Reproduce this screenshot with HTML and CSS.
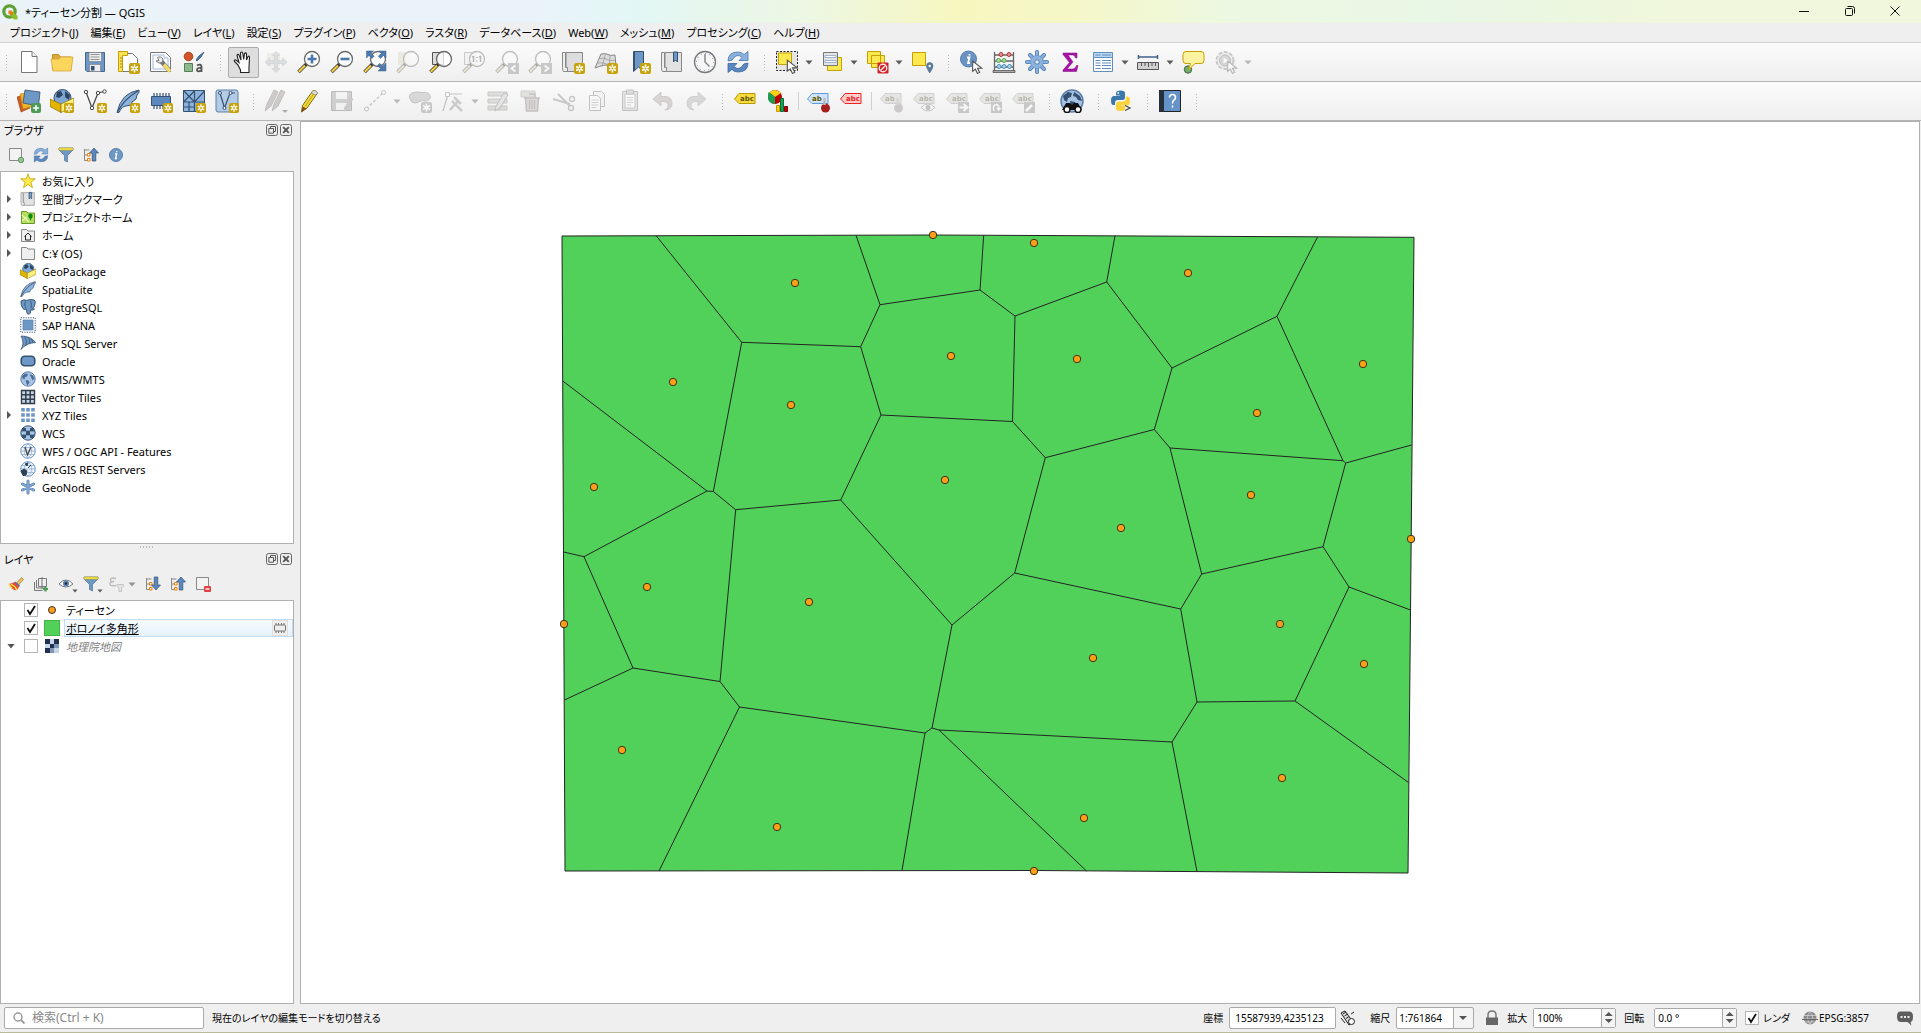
FILE: index.html
```
<!DOCTYPE html>
<html lang="ja">
  <head>
    <meta charset="UTF-8" />
    <meta name="viewport" content="width=device-width, initial-scale=1.0" />
    <title>*ティーセン分割 — QGIS</title>
    <link rel="stylesheet" href="styles.css">
  </head>
  <body>
    <!-- icon sprite -->
    <svg class="sprite" aria-hidden="true">
      <symbol id="new-badge" viewBox="0 0 11 11"><rect width="11" height="11" rx="2" fill="#c8a20a"/><path d="M5.5 1.5v8M2 3.5l7 4M2 7.5l7-4" stroke="#fff" stroke-width="1.500"/><circle cx="5.5" cy="5.5" r="1" fill="#c8a20a"/></symbol>
      <symbol id="caret" viewBox="0 0 8 5"><path d="M.5.5h7L4 4.500z" fill="#5c5c5c"/></symbol>
      <symbol id="magnifier" viewBox="0 0 24 24"><path d="M9.5 14L1.5 22" stroke="#333" stroke-width="3.500"/><path d="M8 15.500L1.800 21.700" stroke="#f5cf3e" stroke-width="2.200"/><circle cx="15" cy="9" r="7.500" fill="#fff" fill-opacity=".75" stroke="#6b6b6b" stroke-width="1.300"/></symbol>
      <symbol id="cursor" viewBox="0 0 11 13"><path d="M1 1v9.500l2.500-2 2 4 2-1-2-3.800h4z" fill="#fff" stroke="#555" stroke-width="1"/></symbol>
      <symbol id="globe" viewBox="0 0 24 24"><circle cx="12" cy="12" r="11" fill="#a8c4e4" stroke="#5a80ab" stroke-width="1.500"/><path d="M3 7l5-4 4 1-1 4-3 1-1 4-3-2zM14 3l6 4 2 5-4-1-2-3-3-1zM10 12l5 1 2 3-3 5-3-1z" fill="#34516f"/></symbol>
      <symbol id="wms" viewBox="0 0 16 16"><circle cx="8" cy="8" r="7.200" fill="#a8c4e4" stroke="#5a80ab"/><path d="M2 5l3-2.500 3 .5-1 2.500-2 .5-.5 2.500-2-1zM9.500 3l3.500 1.500 1.500 3-2 2-1.500-3.500zM5.500 9l3 .5 1 2-2 3-1-2z" fill="#4a6d96"/></symbol>
      <symbol id="wire-globe" viewBox="0 0 16 16"><circle cx="8" cy="8" r="7.300" fill="#eef4fb" stroke="#6d97c4"/><path d="M1 8h14M2 4.500h12M2 11.500h12M8 1c-5 4-5 10 0 14M8 1c5 4 5 10 0 14" fill="none" stroke="#8fb0d6" stroke-width=".8"/></symbol>

      <symbol id="logo" viewBox="0 0 16 16"><circle cx="7.500" cy="7.500" r="5.700" fill="none" stroke="#5fa033" stroke-width="3.200"/><path d="M7.500 7.500h3.500l4.500 4.500v3.500h-3.500L7.500 11z" fill="#8cbf2e"/><path d="M6.500 6.500h4l-1 1 2 2-2 2-2-2-1 1z" fill="#ee7913"/></symbol>
      <symbol id="doc-new" viewBox="0 0 24 24"><path d="M4.500 1.500h10.500l5 5v16H4.500z" fill="#fff" stroke="#777"/><path d="M15 1.500v5h5" fill="#eee" stroke="#777"/></symbol>
      <symbol id="folder-open" viewBox="0 0 24 24"><path d="M2.500 20V4.500h6l2 2.500H21v13z" fill="#dba93b" stroke="#c08f28"/><path d="M1 9h8l2-2h12l-2 14H3z" fill="#fbd65c" stroke="#d5a73c" stroke-width=".8"/></symbol>
      <symbol id="save" viewBox="0 0 24 24"><path d="M2.500 2.500h19v19H4l-1.500-1.500z" fill="#6d97c4" stroke="#41668f"/><path d="M6 2.500h12.500v9H6z" fill="#eee" stroke="#777" stroke-width=".6"/><path d="M7.500 4.500h9M7.500 7h9M7.500 9.500h9" stroke="#888" stroke-width=".9"/><path d="M6.500 14.500h11v7h-11z" fill="#eee" stroke="#777" stroke-width=".6"/><path d="M8 16h3.500v4.500H8z" fill="#34516f"/></symbol>
      <symbol id="layout-new" viewBox="0 0 24 24"><path d="M4.500 3.500h12l5 5v13h-17z" fill="#fff" stroke="#777"/><path d="M2.500 1.500h9v4h-5v16h-4z" fill="#fce15a" stroke="#c4a000"/><path d="M4 8h2M4 11h2M4 14h2M4 17h2" stroke="#a58500"/><use href="#new-badge" x="13" y="13" width="11" height="11"/></symbol>
      <symbol id="layout-manager" viewBox="0 0 24 24"><path d="M1.500 2.500h15l5 5v14h-20z" fill="#fff" stroke="#777"/><path d="M4 5h11v3h4v11H4z" fill="#fff" stroke="#9cb9dc"/><path d="M11 10l9 10" stroke="#777" stroke-width="4.500"/><path d="M8.500 7.500c2-1 5-1 5.500 2.500l-1 2.500-3 .5-3-2 3-.5z" fill="#eee" stroke="#777"/><path d="M15 14.500l6 7" stroke="#f5dc6a" stroke-width="3.500"/></symbol>
      <symbol id="style-manager" viewBox="0 0 24 24"><circle cx="6.500" cy="6.500" r="4.300" fill="#d0542d" stroke="#ad3c19"/><path d="M14 10l3-4 5-4-3 5-4 4z" fill="#5179a8" stroke="#41668f"/><path d="M2.500 13.500h8v8h-8z" fill="#8cb88a" stroke="#57805a"/><path d="M15 15.500q4-2 4.500 1V22M19 18q-4-.5-4 2 .5 2.500 4 .5" fill="none" stroke="#555" stroke-width="1.800"/></symbol>
      <symbol id="hand" viewBox="0 0 24 24"><path d="M7 15L3.500 11.500q-1-2 1.500-1.500l3 2.500-2-7q.5-2 2-.5l2 5-.5-7q1-2 2.200 0l1 6.500.8-6q1.500-1.500 2 .5v6l1.500-3.500q1.500-1 1.500 1L18 17v5.500H9.500V20z" fill="#fff" stroke="#222" stroke-width="1.100"/></symbol>
      <symbol id="pan-selection" viewBox="0 0 24 24"><path d="M3 3h13v13H3z" fill="#ece0b0"/><path d="M12 1.500l4 4h-2.500v5h5V8l4.500 4-4.500 4v-2.500h-5v5H16L12 22.500l-4-4h2.500v-5h-5V16L1 12l4.500-4v2.500h5v-5H8z" fill="#aebccb" stroke="#8b99a8" stroke-width=".7"/></symbol>
      <symbol id="zoom-in" viewBox="0 0 24 24"><use href="#magnifier"/><path d="M15 4.500v9M10.500 9h9" stroke="#4a78ad" stroke-width="2.600"/></symbol>
      <symbol id="zoom-out" viewBox="0 0 24 24"><use href="#magnifier"/><path d="M10.500 9h9" stroke="#4a78ad" stroke-width="2.600"/></symbol>
      <symbol id="zoom-full" viewBox="0 0 24 24"><use href="#magnifier"/><path d="M3.500 1h7l-2.300 2.300 3 3-2.200 2.200-3-3L3.500 8zM16 1h7v7l-2.500-2.500-3 3-2.200-2.200 3-3zM23 13v8h-8l2.500-2.500-3-3 2.200-2.200 3 3z" fill="#4d79ad" stroke="#3a6291" stroke-width=".5"/></symbol>
      <symbol id="zoom-selection" viewBox="0 0 24 24"><path d="M2 2h12v13H2z" fill="#e4d68c"/><use href="#magnifier"/></symbol>
      <symbol id="zoom-layer" viewBox="0 0 24 24"><path d="M3.500 2.500h11v12h-11z" fill="#ddd" stroke="#555"/><use href="#magnifier"/></symbol>
      <symbol id="zoom-native" viewBox="0 0 24 24"><path d="M2.500 2.500h11v12h-11z" fill="#eee" stroke="#888"/><use href="#magnifier"/><path d="M11.500 6v6M18.500 6v6M10 7l1.500-1M17 7l1.500-1M15 7v1M15 10.500v1" stroke="#555" stroke-width="1.500"/></symbol>
      <symbol id="zoom-last" viewBox="0 0 24 24"><use href="#magnifier"/><path d="M13 13h11v11H13z" fill="#888"/><path d="M20.500 15.500l-4 3 4 3" fill="none" stroke="#fff" stroke-width="1.800"/></symbol>
      <symbol id="zoom-next" viewBox="0 0 24 24"><use href="#magnifier"/><path d="M13 13h11v11H13z" fill="#888"/><path d="M16.500 15.500l4 3-4 3" fill="none" stroke="#fff" stroke-width="1.800"/></symbol>
      <symbol id="map-new" viewBox="0 0 24 24"><path d="M5 2.500h16.500v19H5z" fill="#ddd" stroke="#888"/><path d="M1.500 2.500h3v15h2v4h-4q-1-1-1-4z" fill="#eee" stroke="#888"/><use href="#new-badge" x="13" y="13" width="11" height="11"/></symbol>
      <symbol id="map3d-new" viewBox="0 0 24 24"><path d="M7 4q5-1 7 .5t7 .5l1 12q-5 0-8-1.500T1 18z" fill="#ddd" stroke="#888"/><path d="M5.500 8.500q5-1 7.500 1t8.500.5M3 13q6-1 9 1t9 0M11.500 4L8 16.500M16 5l-.5 11" stroke="#999" fill="none" stroke-width=".8"/><use href="#new-badge" x="13" y="13" width="11" height="11"/></symbol>
      <symbol id="bookmark-new" viewBox="0 0 24 24"><path d="M6.500 1.500h10v20L11.500 17l-5 4.500z" fill="#6d97c4" stroke="#34516f"/><path d="M7 2v18" stroke="#34516f" stroke-width="2"/><use href="#new-badge" x="13" y="13" width="11" height="11"/></symbol>
      <symbol id="bookmarks" viewBox="0 0 24 24"><path d="M5 2.500h16.500v19H5z" fill="#e2e2e2" stroke="#888"/><path d="M1.500 2.500h3v15h2v4h-4q-1-1-1-4z" fill="#eee" stroke="#888"/><path d="M13.500 2h4v10l-2-2-2 2z" fill="#6d97c4" stroke="#34516f"/></symbol>
      <symbol id="clock" viewBox="0 0 24 24"><circle cx="12" cy="12" r="10.500" fill="#f6f6f6" stroke="#777" stroke-width="1.300"/><circle cx="12" cy="12" r="8.500" fill="none" stroke="#5a86b8" stroke-dasharray="1 3.450"/><path d="M12 4v8l4.500 4.500" fill="none" stroke="#888" stroke-width="1.500"/></symbol>
      <symbol id="refresh" viewBox="0 0 24 24"><path d="M2 11q0-9 10-9 4 0 6 2.500L22 1.500v9h-9l3-3q-4-4-8 0-1 3.500-6 3.500z" fill="#8ab0dc" stroke="#4a78ad" stroke-width=".8"/><path d="M22 13q0 9-10 9-4 0-6-2.500L2 22.500v-9h9l-3 3q4 4 8 0 1-3.500 6-3.500z" fill="#5b88bf" stroke="#3c6a9f" stroke-width=".8"/></symbol>
      <symbol id="select" viewBox="0 0 24 24"><path d="M1.500 1.500h21v19h-21z" fill="#e4e4e4" stroke="#222" stroke-dasharray="2 1.500"/><path d="M3.500 3h13v11.500h-13z" fill="#fce94f" stroke="#c4a000"/><use href="#cursor" x="11" y="9" width="13" height="15"/></symbol>
      <symbol id="select-value" viewBox="0 0 24 24"><path d="M7.500 7.500h14v13h-14z" fill="#fce94f" stroke="#c4a000"/><path d="M3.500 2.500h14v13h-14z" fill="#e4e4e4" stroke="#777"/><path d="M5 5.500h11v2H5zM5 10.500h11v2H5z" fill="#fff" stroke="#8aa6c7" stroke-width=".8"/></symbol>
      <symbol id="deselect" viewBox="0 0 24 24"><path d="M2.500 1.500h13v12h-13zM6.500 5.500h13v12h-13z" fill="#fce94f" stroke="#c4a000"/><rect x="12.500" y="12.500" width="11" height="11" rx="1" fill="#d2232a"/><circle cx="18" cy="18" r="3.800" fill="none" stroke="#fff" stroke-width="1.200"/><path d="M15.500 20.500l5-5" stroke="#fff" stroke-width="1.200"/></symbol>
      <symbol id="select-location" viewBox="0 0 24 24"><path d="M2.500 2.500h13v13h-13z" fill="#fce94f" stroke="#c4a000"/><path d="M16.500 16q0-3.500 3.200-3.500T23 16q0 2-3.300 7-3.200-5-3.200-7z" fill="#5a7f9e" stroke="#46657f" stroke-width=".6"/><circle cx="19.700" cy="16" r="1.200" fill="#fff"/></symbol>
      <symbol id="identify" viewBox="0 0 24 24"><circle cx="9.500" cy="9" r="8" fill="#6a93c4" stroke="#557fb0"/><path d="M8 7.500h2.500L9 13h2M10.500 4v1.500" fill="none" stroke="#fff" stroke-width="1.800"/><use href="#cursor" x="12" y="10" width="13" height="14"/></symbol>
      <symbol id="abacus" viewBox="0 0 24 24"><path d="M2.500 2v19M21.500 2v19M2 5h20M2 11h20M2 17h20" stroke="#666" stroke-width="1.300"/><path d="M1 20.500h22v2H1z" fill="#aaa" stroke="#555" stroke-width=".8"/><g fill="#e89090" stroke="#b93030"><circle cx="9" cy="4.500" r="2"/><circle cx="17" cy="4.500" r="2"/></g><g fill="#a9dca0" stroke="#55a050"><circle cx="6.500" cy="10.500" r="2"/><circle cx="12" cy="10.500" r="2"/></g><g fill="#a9d0e8" stroke="#4a90b8"><circle cx="7" cy="16.500" r="2"/><circle cx="12" cy="16.500" r="2"/><circle cx="17.500" cy="16.500" r="2"/></g></symbol>
      <symbol id="gear" viewBox="0 0 24 24"><path d="M12 2v20M2 12h20M5 5l14 14M19 5L5 19" stroke="#4e7fb5" stroke-width="4" stroke-linecap="round"/><path d="M12 2v20M2 12h20M5 5l14 14M19 5L5 19" stroke="#8db2de" stroke-width="2.300" stroke-linecap="round"/><circle cx="12" cy="12" r="6.500" fill="#8db2de" stroke="#6692c6" stroke-width=".7"/><circle cx="12" cy="12" r="2.200" fill="#e8eef6" stroke="#4e7fb5"/></symbol>
      <symbol id="sigma" viewBox="0 0 24 24"><path d="M5 3h14v5h-1.500q-.5-3-3-3H10l5 7-6 7h5.500q3 0 4-3.500H20L18.500 21.500H5V20l6.500-7.500L5 4.500z" fill="#a912a9" stroke="#7d0a7d" stroke-width=".5"/></symbol>
      <symbol id="table" viewBox="0 0 24 24"><path d="M2.500 2.500h19v19h-19z" fill="#fff" stroke="#5f8fbf"/><path d="M3 3h18v4.500H3z" fill="#b9d5ef"/><path d="M3 7.500h18M4.500 5h5M11 5h9M4.500 10.500h5M11 10.500h9M4.500 13h5M11 13h9M4.500 15.500h5M11 15.500h9M4.500 18.500h5M11 18.500h9" stroke="#5f8fbf"/></symbol>
      <symbol id="measure" viewBox="0 0 24 24"><path d="M2.500 5v4M21.500 5v4M2.500 7h19" stroke="#41618a" stroke-width="1.500"/><path d="M1.500 12.500h21v7h-21z" fill="#d0d0d0" stroke="#555"/><path d="M5.500 13v3M9 13v3M12.500 13v4M16 13v3M19.500 13v3" stroke="#555"/></symbol>
      <symbol id="maptip" viewBox="0 0 24 24"><circle cx="7" cy="19.500" r="3.700" fill="#6fae6c" stroke="#44683f"/><path d="M5 1.500h15q3 0 3 3v6q0 3-3 3h-6L7.500 20l2-6.500H5q-3 0-3-3v-6q0-3 3-3z" fill="#fcf3a0" stroke="#c4a000"/></symbol>
      <symbol id="action" viewBox="0 0 24 24"><circle cx="11" cy="10.500" r="8.500" fill="#ddd" stroke="#888" stroke-width="2" stroke-dasharray="4 1.500"/><circle cx="11" cy="10.500" r="5.500" fill="#aaa" stroke="#666"/><path d="M9.500 7.500l5 3-5 3z" fill="#fff"/><use href="#cursor" x="12" y="10" width="13" height="14"/></symbol>

      <symbol id="datasource" viewBox="0 0 24 24"><path d="M0 8l9-3 4 14-9 4z" fill="#cf5a26" stroke="#9a3c12" stroke-width=".6"/><path d="M3 5l13-2 1 14-11 3z" fill="#efb52c" stroke="#b58412" stroke-width=".6"/><path d="M8 1l15 2-1.500 14L6 14z" fill="#6d97c4" stroke="#34516f" stroke-width=".8"/><rect x="14" y="14" width="10" height="10" rx="2" fill="#4f9a58"/><path d="M19 16v6M16 19h6" stroke="#fff" stroke-width="1.500"/></symbol>
      <symbol id="geopackage" viewBox="0 0 24 24"><circle cx="12.500" cy="9" r="8.500" fill="#7fa8d6" stroke="#34516f"/><path d="M7 3l4-1 2 4-4 3-3-1zM15 2l5 4-1 5-4-3z" fill="#2c4661"/><path d="M0 10l11 5v8.500L0 17.500z" fill="#e3b400" stroke="#8d6f00" stroke-width=".7"/><path d="M11 15l13-6v8l-13 6.500z" fill="#fdf07a" stroke="#8d6f00" stroke-width=".7"/></symbol>
      <symbol id="geopackage-new" viewBox="0 0 24 24"><use href="#geopackage"/><use href="#new-badge" x="14" y="14" width="10" height="10"/></symbol>
      <symbol id="shapefile" viewBox="0 0 24 24"><path d="M3 3l6 16L15 4l6-1.500" fill="none" stroke="#444" stroke-width="1.200"/><g fill="#fff" stroke="#444"><circle cx="3" cy="3" r="1.700"/><circle cx="9" cy="19" r="1.700"/><circle cx="15" cy="4" r="1.700"/><circle cx="21.500" cy="2.500" r="1.700"/></g><use href="#new-badge" x="14" y="14" width="10" height="10"/></symbol>
      <symbol id="feather" viewBox="0 0 24 24"><path d="M1 23.500Q5 4 23 1q1 2-2 5l-1 4-4 3-1 3-5 1q-4 0-7 6.500z" fill="#8eb3de" stroke="#34516f"/><path d="M1.500 23Q8 10 22 2" fill="none" stroke="#34516f" stroke-width="1.200"/></symbol>
      <symbol id="feather-new" viewBox="0 0 24 24"><use href="#feather"/><use href="#new-badge" x="14" y="14" width="10" height="10"/></symbol>
      <symbol id="chip" viewBox="0 0 24 24"><path d="M5 4v16M8 4v16M11 4v16M14 4v16M17 4v16M20 4v16" stroke="#34516f" stroke-width="1.200"/><path d="M2.500 7.500h19v9h-19z" fill="#5b88bf" stroke="#34516f"/></symbol>
      <symbol id="chip-new" viewBox="0 0 24 24"><use href="#chip"/><use href="#new-badge" x="14" y="14" width="10" height="10"/></symbol>
      <symbol id="memory" viewBox="0 0 16 16"><path d="M0 0h16v16H0z" fill="#eee" stroke="#d5d5d5"/><path d="M4 3v10M6.500 3v10M9.500 3v10M12 3v10" stroke="#777"/><rect x="2.500" y="5" width="11" height="6" rx="1" fill="#eee" stroke="#777"/></symbol>
      <symbol id="mesh" viewBox="0 0 24 24"><path d="M1.500 1.500h21v21h-21z" fill="#8eb3de" stroke="#34516f"/><path d="M1.500 13h21M12.500 1.500v21M7 13v9.500M1.500 18h11M1.500 1.500l11 11.500M12.500 2l-11 11M12.500 13L22.500 2" fill="none" stroke="#34516f" stroke-width="1.200"/><use href="#new-badge" x="14" y="14" width="10" height="10"/></symbol>
      <symbol id="virtual" viewBox="0 0 24 24"><rect x="1" y="1" width="22" height="22" rx="2" fill="#b4cbe6" stroke="#5a80ab"/><path d="M5 4l4.500 15L15 4h5" fill="none" stroke="#34516f" stroke-width="1.200"/><g fill="#fff" stroke="#34516f"><circle cx="5" cy="4" r="1.500"/><circle cx="9.500" cy="19" r="1.500"/><circle cx="15.500" cy="4" r="1.500"/></g><use href="#new-badge" x="14" y="14" width="10" height="10"/></symbol>
      <symbol id="pencils" viewBox="0 0 24 24"><path d="M1 22l2-7L10 1l4 2-7 14zM8 22l2-7L17 1l4 2-7 14z" fill="#aa8484" stroke="#876868"/><path d="M18 21h6l-3 3z" fill="#444"/></symbol>
      <symbol id="pencil" viewBox="0 0 24 24"><path d="M4.500 23l1-6.500L16 1.500q3-.5 4.500 2.500L10 19z" fill="#f3dc3c" stroke="#7c6a14"/><path d="M8 17.500L18 3" stroke="#b89b12"/><path d="M4.500 23l1-5.500 4 2z" fill="#7c4a20"/><path d="M16 1.500q3-.5 4.500 2.500L18.500 6 14.500 4z" fill="#ddd" stroke="#888" stroke-width=".6"/></symbol>
      <symbol id="save-edit" viewBox="0 0 24 24"><path d="M1.500 2.500h20v19h-20z" fill="#999" stroke="#666"/><path d="M6 3h11v7H6zM6 14h11v7H6z" fill="#eee"/><path d="M14 22l1-4 6-9 2 1-6 10z" fill="#b98787" stroke="#987"/></symbol>
      <symbol id="digitize" viewBox="0 0 24 24"><path d="M3 20L21 3" stroke="#777" stroke-width="1.300" stroke-dasharray="3 2"/><circle cx="3.500" cy="20" r="2" fill="#fff" stroke="#777"/><circle cx="20.500" cy="3.500" r="2" fill="#fff" stroke="#777"/></symbol>
      <symbol id="polygon-new" viewBox="0 0 24 24"><path d="M2 10q-2-5 3-6.500 5-1 9 0 8-1 8.500 5-2 5-8 3-4 1.500-7 2.500Q3 14 2 10z" fill="#a9aca8" stroke="#777"/><rect x="13" y="13" width="11" height="11" rx="2" fill="#888"/><path d="M18.500 14.500v8M15 16.500l7 4M15 20.500l7-4" stroke="#fff" stroke-width="1.500"/></symbol>
      <symbol id="vertex" viewBox="0 0 24 24"><path d="M2 22L6.500 7M7 5h14" stroke="#777" fill="none" stroke-width="1.200"/><path d="M4.500 3.500h4v4h-4z" fill="#fff" stroke="#777"/><path d="M9 21L18 11M13 8l7 7M11 12l10 10" stroke="#998f85" stroke-width="2.500"/></symbol>
      <symbol id="attributes-edit" viewBox="0 0 24 24"><path d="M2 3h19v4H2zM2 10h19v4H2zM2 17h19v4H2z" fill="#b9b99a" stroke="#888"/><path d="M9 22l1-5L18 4l4 2-8 13z" fill="#ccc" stroke="#876868"/></symbol>
      <symbol id="trash" viewBox="0 0 24 24"><path d="M2 2h14v6H2z" fill="#c5c5a0" stroke="#999"/><path d="M5 9h16M6.500 9l1 13h11l1-13M10 5h6v4" fill="#c9b0b0" stroke="#9b6d6d" stroke-width="1.500"/><path d="M10.500 11v9M13 11v9M15.500 11v9" stroke="#9b6d6d" stroke-width="1.300"/></symbol>
      <symbol id="cut" viewBox="0 0 24 24"><path d="M1 10l17 5M6 5l12 12" stroke="#888" stroke-width="2"/><circle cx="20" cy="10" r="2.500" fill="none" stroke="#888" stroke-width="1.500"/><circle cx="19" cy="19" r="2.500" fill="none" stroke="#888" stroke-width="1.500"/></symbol>
      <symbol id="copy" viewBox="0 0 24 24"><path d="M8.500 2.500h8l3 3v12h-11z" fill="#eee" stroke="#777"/><path d="M4.500 6.500h8l3 3v12h-11z" fill="#fff" stroke="#777"/><path d="M6.500 11h7M6.500 13.500h7M6.500 16h7M6.500 18.500h5" stroke="#999"/></symbol>
      <symbol id="paste" viewBox="0 0 24 24"><path d="M4.500 2.500h15v19h-15z" fill="#ccc" stroke="#777"/><path d="M7 5h10v14H7z" fill="#fff" stroke="#888"/><path d="M8.500 1h7v4h-7z" fill="#bbb" stroke="#777"/><path d="M9 8.500h6M9 11h6M9 13.500h6M9 16h4" stroke="#999"/></symbol>
      <symbol id="undo" viewBox="0 0 24 24"><path d="M2 10l8-7v4.500h4q7 0 7 7 0 6-7 6.500 4-2 3-5.500-1-3-4-3h-3V17z" fill="#b9a193" stroke="#a08878"/></symbol>
      <symbol id="redo" viewBox="0 0 24 24"><path d="M22 10l-8-7v4.500h-4q-7 0-7 7 0 6 7 6.500-4-2-3-5.500 1-3 4-3h3V17z" fill="#a5b0a5" stroke="#8d998d"/></symbol>
      <symbol id="label" viewBox="0 0 24 24"><path d="M1.500 10L6 4.500h16v10H6z" fill="#f5dc3c" stroke="#b99a00"/></symbol>
      <symbol id="diagram" viewBox="0 0 24 24"><circle cx="9" cy="8" r="7" fill="#c00000"/><path d="M9 8L3.500 3.500Q9-1.500 15 4z" fill="#fcd116"/><path d="M9 8v7Q2 14.500 2 8t1.500-4.500z" fill="#1aa055"/><path d="M10.500 16.500h3v6h-3z" fill="#fcd116" stroke="#c49a00"/><path d="M14.500 9.500h3v13h-3z" fill="#1aa055" stroke="#087038"/><path d="M18.500 17.500h3v5h-3z" fill="#c00000" stroke="#800"/></symbol>
      <symbol id="label-pin" viewBox="0 0 24 24"><path d="M1.500 10L6 4.500h16v10H6z" fill="#cfe4fb" stroke="#5f9bd8"/><circle cx="19.500" cy="19" r="4.500" fill="#a92020"/><path d="M18.500 9v7" stroke="#bbb" stroke-width="2.500"/></symbol>
      <symbol id="label-red" viewBox="0 0 24 24"><path d="M1.500 10L6 4.500h16v10H6z" fill="#fcc" stroke="#ee2222"/></symbol>
      <symbol id="label-gray" viewBox="0 0 24 24"><path d="M1.500 10L6 4.500h16v10H6z" fill="#d0ccb8" stroke="#999"/></symbol>
      <symbol id="tool-pin" viewBox="0 0 24 24"><circle cx="19.500" cy="19" r="4.500" fill="#a88"/><path d="M18.500 9v7" stroke="#aaa" stroke-width="2.500"/></symbol>
      <symbol id="tool-eye" viewBox="0 0 24 24"><path d="M9 18.500q7-7 14 0-7 7-14 0z" fill="#fff" stroke="#777"/><circle cx="16" cy="18.500" r="2.500" fill="#777"/></symbol>
      <symbol id="tool-move" viewBox="0 0 24 24"><path d="M13 13h11v11H13z" fill="#888"/><path d="M14.500 18.500h7M18.500 15l4 3.500-4 3.500" stroke="#fff" fill="none" stroke-width="2"/></symbol>
      <symbol id="tool-rotate" viewBox="0 0 24 24"><path d="M13 13h11v11H13z" fill="#888"/><path d="M16 22q-2-6 2.500-6.500 3 1 2 5M19 19l1.500 2 2-2" stroke="#fff" fill="none" stroke-width="1.500"/></symbol>
      <symbol id="tool-edit" viewBox="0 0 24 24"><path d="M13 13h11v11H13z" fill="#888"/><path d="M15 22l6-6" stroke="#fff" stroke-width="2.500"/></symbol>
      <symbol id="metasearch" viewBox="0 0 24 24"><use href="#globe"/><path d="M6 14l4 0 2 2 2-2h4l4 7H2z" fill="#111"/><circle cx="7" cy="20.500" r="3" fill="#fff" stroke="#111" stroke-width="1.500"/><circle cx="18" cy="20.500" r="3" fill="#fff" stroke="#111" stroke-width="1.500"/></symbol>
      <symbol id="python" viewBox="0 0 24 24"><path d="M7 7V4q0-2.500 4.500-2.500T16 4v4.500q0 2.500-2.500 2.500H9q-3 0-3 3v2H4.500Q2 16 2 11.500T5 7h6V6.500H7z" fill="#3b77a8"/><path d="M16 17v2.500q0 2.500-4.500 2.500T7 19.500V15q0-2.500 2.500-2.500H14q3 0 3-3v-2h1.500Q21 7.500 21 12t-3 4.500h-6v.5z" fill="#fcd23c"/><circle cx="9.200" cy="4" r=".9" fill="#fff"/><path d="M16 16.500l5 2.500-5 2.500" fill="none" stroke="#444" stroke-width="1.200"/></symbol>
      <symbol id="help" viewBox="0 0 24 24"><path d="M1.500 1.500h21v21h-21z" fill="#6592c8" stroke="#222"/><path d="M1 1h5v22H1z" fill="#25303c"/><path d="M11.500 8.500q0-3 3-3t3 3q0 1.500-1.500 2.500t-1.500 3.500M14.500 16.500v2" fill="none" stroke="#fff" stroke-width="1.600"/></symbol>

      <symbol id="add-layer" viewBox="0 0 16 16"><path d="M1.500 1.500h12v12h-12z" fill="#f3f3f3" stroke="#888"/><circle cx="13" cy="13" r="2.700" fill="#9dbd9d" stroke="#5a9a5f"/></symbol>
      <symbol id="filter" viewBox="0 0 16 16"><path d="M1 1h14v2L9.500 8.500V15l-3-1.500v-5L1 3z" fill="#6d97c4" stroke="#41668f" stroke-width=".6"/><path d="M1 1h14v2.200H1z" fill="#fce94f" stroke="#a58d10" stroke-width=".5"/></symbol>
      <symbol id="collapse" viewBox="0 0 16 16"><path d="M1.500 2v11.500h3M1.500 3h5M1.500 8h3" fill="none" stroke="#888"/><path d="M4.500 6.500H7V9H4.500zM4.500 11.500H7V14H4.500z" fill="#fff" stroke="#f08000"/><path d="M9.200 14V6H6.500L11 1l4.500 5h-2.700v8z" fill="#5b88bf" stroke="#34516f" stroke-width=".7"/></symbol>
      <symbol id="expand" viewBox="0 0 16 16"><path d="M1.500 2v11.500h3M1.500 3h5M1.500 8h3" fill="none" stroke="#888"/><path d="M4.500 6.500H7V9H4.500zM4.500 11.500H7V14H4.500z" fill="#fff" stroke="#f08000"/><path d="M9.200 1v8H6.500l4.500 5 4.500-5h-2.700V1z" fill="#5b88bf" stroke="#34516f" stroke-width=".7"/></symbol>
      <symbol id="info" viewBox="0 0 16 16"><circle cx="8" cy="8" r="6.500" fill="#6d97c4" stroke="#5a80ab"/><path d="M7 7h1.700L7.500 11.500H9M8.800 4v1.300" fill="none" stroke="#fff" stroke-width="1.300"/></symbol>
      <symbol id="float" viewBox="0 0 12 12"><rect x=".5" y=".5" width="11" height="11" rx="2" fill="#eee" stroke="#666"/><path d="M4.500 4V2.500H9.500v5H8M2.800 4.500h4.700v4.700H2.800z" fill="none" stroke="#555"/></symbol>
      <symbol id="close" viewBox="0 0 12 12"><rect x=".5" y=".5" width="11" height="11" rx="2" fill="#eee" stroke="#666"/><path d="M3.200 3.200l5.600 5.600M8.800 3.200L3.200 8.800" stroke="#555" stroke-width="1.900"/></symbol>
      <symbol id="star" viewBox="0 0 16 16"><path d="M8 .8l1.800 5h5.500l-4.400 3.400 1.600 5.500L8 11.400l-4.500 3.300 1.600-5.500L.7 5.800h5.500z" fill="#fcea4f" stroke="#c4a000" stroke-width=".8"/></symbol>
      <symbol id="folder" viewBox="0 0 16 16"><path d="M1.500 14.500v-12h5l1.500 1.500h6.500v10.500z" fill="#eee" stroke="#888"/></symbol>
      <symbol id="project-home" viewBox="0 0 16 16"><path d="M1.500 14.500v-12h5l1.500 1.500h6.500v10.500z" fill="#b5de5a" stroke="#69962a"/><path d="M2 6l7 7M2 12l5-4" stroke="#e8f5c0" stroke-width="1.200"/><circle cx="10.500" cy="7" r="2.300" fill="#0a8a12"/><path d="M9 8h3l-1.500 4z" fill="#0a8a12"/></symbol>
      <symbol id="home" viewBox="0 0 16 16"><path d="M1.500 14.500v-12h5l1.500 1.500h6.500v10.500z" fill="#eee" stroke="#888"/><path d="M4.500 9.500L8 6l3.500 3.500M5.500 9v4h5V9" fill="none" stroke="#222"/></symbol>
      <symbol id="postgres" viewBox="0 0 16 16"><path d="M1 2q3-2 6-.5 3-2 7-.5 2 1 1 4-.5 3-2.500 4.500 2 .5 2 .5-1 1.500-4 1V14q-1 1.500-3 1-1-1-1-4.500Q3.500 11 2.500 9 .5 5 1 2z" fill="#6d97c4" stroke="#34516f" stroke-width=".9"/><path d="M5 2.500q-1 4 1 7M10.500 2q1.500 3 .5 7.500" fill="none" stroke="#34516f" stroke-width=".8"/></symbol>
      <symbol id="hana" viewBox="0 0 16 16"><path d="M.8.800h14.400v14.400H.8z" fill="none" stroke="#34516f" stroke-dasharray="1.200 1.200"/><path d="M3 3h10v10H3z" fill="#6d97c4" stroke="#5a80ab" stroke-width=".7"/></symbol>
      <symbol id="mssql" viewBox="0 0 16 16"><path d="M1 1q10 0 14.500 6.500Q6 8 1 14.500 5 8 1 1z" fill="#6d97c4" stroke="#34516f" stroke-width=".8"/><path d="M4.500 1.500q3 4 1.500 9M8 2q2.500 3 1.500 6.500M11 3.500q1.500 2 1.500 4" fill="none" stroke="#34516f" stroke-width=".8"/></symbol>
      <symbol id="oracle" viewBox="0 0 16 16"><rect x="1.200" y="3.200" width="13.600" height="9.600" rx="3.500" fill="#6d97c4" stroke="#34516f" stroke-width="1.600"/></symbol>
      <symbol id="vtiles" viewBox="0 0 16 16"><path d="M1.500 1.500h13v13h-13z" fill="#c4d6ea" stroke="#333d4a" stroke-width="1.400"/><path d="M5.800 1v14M10.200 1v14M1 5.800h14M1 10.200h14" stroke="#333d4a" stroke-width="1.500"/></symbol>
      <symbol id="xyz" viewBox="0 0 16 16"><path d="M3 1v14M8 1v14M13 1v14" stroke="#6d97c4" stroke-width="3.600" stroke-dasharray="3.600 1.600"/></symbol>
      <symbol id="wcs" viewBox="0 0 16 16"><circle cx="8" cy="8" r="7.200" fill="#a8c4e4" stroke="#34516f"/><path d="M3 3h3v3H1.500zM10 3h3l1.500 3H10zM6 6h4v4H6zM1.500 10H6v3H3zM10 10h4.500L13 13h-3z" fill="#34516f"/><path d="M1 6h14M1 10h14" stroke="#34516f" stroke-width=".7"/></symbol>
      <symbol id="wfs" viewBox="0 0 16 16"><use href="#wire-globe"/><path d="M5 4l2.500 8L11 4" fill="none" stroke="#444" stroke-width="1.300"/></symbol>
      <symbol id="arcgis" viewBox="0 0 16 16"><use href="#wire-globe"/><path d="M1 10l3-2 3 2-1 4-3 .5zM5 3l3-1-1 3zM8 7l3-3" fill="#2f4154" stroke="#2f4154"/></symbol>
      <symbol id="geonode" viewBox="0 0 16 16"><path d="M8 2v12M2.500 5l11 6M2.500 11l11-6" stroke="#5a80ab" stroke-width="3" stroke-linecap="round"/><path d="M8 2v12M2.500 5l11 6M2.500 11l11-6" stroke="#7fa6d3" stroke-width="1.800" stroke-linecap="round"/></symbol>
      <symbol id="brush" viewBox="0 0 16 16"><path d="M8 7.500l5.500-6 2 2L10.500 9z" fill="#f0c060" stroke="#8a6420" stroke-width=".6"/><path d="M1 8l6-2 4.500 4L9 14q-2 1-5-1.500T1 8z" fill="#e94b2c"/><path d="M3 8l4 3 2 3M1 8.500l3 4" stroke="#fcdf4f" stroke-width="1.500"/><path d="M7 6l4.500 4" stroke="#4a78ad" stroke-width="1.500"/></symbol>
      <symbol id="group" viewBox="0 0 16 16"><path d="M1.500 6v8.500h8M3.500 4v8h8M5.500 2.500h8v8h-8zM9 13V1" fill="none" stroke="#777"/><path d="M12.500 10.500v5M10 13h5" stroke="#4f9a58" stroke-width="2.200"/></symbol>
      <symbol id="eye" viewBox="0 0 16 16"><path d="M1 8q7-8 14 0-7 6-14 0z" fill="#fff" stroke="#777"/><circle cx="8" cy="7.500" r="3" fill="#5b88bf"/><circle cx="8" cy="7.500" r="1.300" fill="#222"/></symbol>
      <symbol id="expression" viewBox="0 0 16 16"><path d="M8 2.500Q3 1 2.500 3.500T6 5.500Q2 5.500 2 8t6 1.500" fill="none" stroke="#999" stroke-width="1.400"/><path d="M9 8.500h6.500v1.500l-2 2v3.500h-2.500V12l-2-2z" fill="#ddd" stroke="#aaa"/></symbol>
      <symbol id="remove" viewBox="0 0 16 16"><path d="M1.500 1.500h12v12h-12z" fill="#f3f3f3" stroke="#888"/><rect x="9" y="10" width="7" height="6" rx="1" fill="#e04040"/><path d="M10.500 13h4" stroke="#fff" stroke-width="1.300"/></symbol>
      <symbol id="raster" viewBox="0 0 14 14"><path d="M0 0h14v14H0z" fill="#c8d6e8"/><path d="M0 0h5v5H0zM9 0h5v5H9zM5 5h4v4H5zM0 9h5v5H0z" fill="#1f3050"/><path d="M5 9h4v5H5zM9 5h5v4H9z" fill="#7f95b5"/></symbol>
      <symbol id="extents" viewBox="0 0 16 16"><path d="M1 3l4-2 8 11-4 3z" fill="#ddd" stroke="#222"/><path d="M3 4l3-2M4.500 6l3-2M6 8.500l3-2M8 11l3-2M1 8l4 5M11 4l3-2" stroke="#222"/><circle cx="11.500" cy="11.500" r="3" fill="#fff" stroke="#222"/></symbol>
      <symbol id="lock" viewBox="0 0 14 16"><path d="M3 8V5q0-4 4-4t4 4v3" fill="none" stroke="#777" stroke-width="1.500"/><path d="M1 7.500h12V15H1z" fill="#666"/></symbol>
      <symbol id="crs" viewBox="0 0 16 16"><circle cx="8" cy="8" r="6.500" fill="#888"/><path d="M0 9h16M2 5.500h12M3 12h10M8 1.500q-5 6 0 13M8 1.500q5 6 0 13" fill="none" stroke="#ddd" stroke-width=".7"/><path d="M0 9.500h16" stroke="#666"/></symbol>
      <symbol id="message" viewBox="0 0 16 16"><path d="M4 1.500h8q4 0 4 5T13.500 12l1 3.500-4-3.500H4Q0 12 0 6.500T4 1.500z" fill="#5e5e5e"/><path d="M3.500 6h2v2h-2zM7 6h2v2H7zM10.500 6h2v2h-2z" fill="#eee"/></symbol>
    </svg>

    <div class="window">
      <header class="titlebar">
        <svg class="logo"><use href="#logo"/></svg>
        <h1>*ティーセン分割 — QGIS</h1>
        <div class="window-buttons">
          <button aria-label="最小化"><svg viewBox="0 0 10 10"><path d="M0 5.500h10" stroke="#111"/></svg></button>
          <button aria-label="元に戻す"><svg viewBox="0 0 10 10"><rect x=".5" y="2.500" width="7" height="7" rx="1" fill="none" stroke="#111"/><path d="M2.500.500h5q2 0 2 2v5" fill="none" stroke="#111"/></svg></button>
          <button aria-label="閉じる"><svg viewBox="0 0 10 10"><path d="M.5.500l9 9M9.500.500l-9 9" stroke="#111"/></svg></button>
        </div>
      </header>

      <nav class="menubar">
        <button>プロジェクト(<u>J</u>)</button>
        <button>編集(<u>E</u>)</button>
        <button>ビュー(<u>V</u>)</button>
        <button>レイヤ(<u>L</u>)</button>
        <button>設定(<u>S</u>)</button>
        <button>プラグイン(<u>P</u>)</button>
        <button>ベクタ(<u>O</u>)</button>
        <button>ラスタ(<u>R</u>)</button>
        <button>データベース(<u>D</u>)</button>
        <button>Web(<u>W</u>)</button>
        <button>メッシュ(<u>M</u>)</button>
        <button>プロセシング(<u>C</u>)</button>
        <button>ヘルプ(<u>H</u>)</button>
      </nav>

      <div class="toolbar">
        <span class="handle"></span>
        <button class="tool" aria-label="新規プロジェクト"><svg><use href="#doc-new"/></svg></button>
        <button class="tool" aria-label="開く"><svg><use href="#folder-open"/></svg></button>
        <button class="tool" aria-label="保存"><svg><use href="#save"/></svg></button>
        <button class="tool" aria-label="新規レイアウト"><svg><use href="#layout-new"/></svg></button>
        <button class="tool" aria-label="レイアウトマネージャ"><svg><use href="#layout-manager"/></svg></button>
        <button class="tool" aria-label="スタイルマネージャ"><svg><use href="#style-manager"/></svg></button>
        <span class="handle"></span>
        <button class="tool active" aria-label="地図を移動"><svg><use href="#hand"/></svg></button>
        <button class="tool" disabled aria-label="選択部分に移動"><svg><use href="#pan-selection"/></svg></button>
        <button class="tool" aria-label="拡大"><svg><use href="#zoom-in"/></svg></button>
        <button class="tool" aria-label="縮小"><svg><use href="#zoom-out"/></svg></button>
        <button class="tool" aria-label="全域表示"><svg><use href="#zoom-full"/></svg></button>
        <button class="tool" disabled aria-label="選択部分にズーム"><svg><use href="#zoom-selection"/></svg></button>
        <button class="tool" aria-label="レイヤにズーム"><svg><use href="#zoom-layer"/></svg></button>
        <button class="tool" disabled aria-label="ネイティブ解像度にズーム"><svg><use href="#zoom-native"/></svg></button>
        <button class="tool" disabled aria-label="直前の表示領域"><svg><use href="#zoom-last"/></svg></button>
        <button class="tool" disabled aria-label="次の表示領域"><svg><use href="#zoom-next"/></svg></button>
        <button class="tool" aria-label="新規地図ビュー"><svg><use href="#map-new"/></svg></button>
        <button class="tool" aria-label="新規3D地図ビュー"><svg><use href="#map3d-new"/></svg></button>
        <button class="tool" aria-label="新規ブックマーク"><svg><use href="#bookmark-new"/></svg></button>
        <button class="tool" aria-label="ブックマークを表示"><svg><use href="#bookmarks"/></svg></button>
        <button class="tool" aria-label="時系列コントローラ"><svg><use href="#clock"/></svg></button>
        <button class="tool" aria-label="再読み込み"><svg><use href="#refresh"/></svg></button>
        <span class="handle"></span>
        <button class="tool menu" aria-label="地物を選択"><svg><use href="#select"/></svg><svg class="caret"><use href="#caret"/></svg></button>
        <button class="tool menu" aria-label="値で選択"><svg><use href="#select-value"/></svg><svg class="caret"><use href="#caret"/></svg></button>
        <button class="tool menu" aria-label="選択解除"><svg><use href="#deselect"/></svg><svg class="caret"><use href="#caret"/></svg></button>
        <button class="tool" aria-label="場所で選択"><svg><use href="#select-location"/></svg></button>
        <span class="handle"></span>
        <button class="tool" aria-label="地物情報を表示"><svg><use href="#identify"/></svg></button>
        <button class="tool" aria-label="フィールド計算機"><svg><use href="#abacus"/></svg></button>
        <button class="tool" aria-label="ツールボックス"><svg><use href="#gear"/></svg></button>
        <button class="tool" aria-label="統計サマリ"><svg><use href="#sigma"/></svg></button>
        <button class="tool menu" aria-label="属性テーブル"><svg><use href="#table"/></svg><svg class="caret"><use href="#caret"/></svg></button>
        <button class="tool menu" aria-label="線の長さを測る"><svg><use href="#measure"/></svg><svg class="caret"><use href="#caret"/></svg></button>
        <button class="tool" aria-label="地図のヒント"><svg><use href="#maptip"/></svg></button>
        <button class="tool menu" disabled aria-label="アクションを実行"><svg><use href="#action"/></svg><svg class="caret"><use href="#caret"/></svg></button>
      </div>

      <div class="toolbar">
        <span class="handle"></span>
        <button class="tool" aria-label="データソースマネージャ"><svg><use href="#datasource"/></svg></button>
        <button class="tool" aria-label="新規GeoPackageレイヤ"><svg><use href="#geopackage-new"/></svg></button>
        <button class="tool" aria-label="新規シェープファイル"><svg><use href="#shapefile"/></svg></button>
        <button class="tool" aria-label="新規SpatiaLiteレイヤ"><svg><use href="#feather-new"/></svg></button>
        <button class="tool" aria-label="新規一時スクラッチレイヤ"><svg><use href="#chip-new"/></svg></button>
        <button class="tool" aria-label="新規メッシュレイヤ"><svg><use href="#mesh"/></svg></button>
        <button class="tool" aria-label="新規仮想レイヤ"><svg><use href="#virtual"/></svg></button>
        <span class="handle"></span>
        <button class="tool" disabled aria-label="現在の編集"><svg><use href="#pencils"/></svg></button>
        <button class="tool" aria-label="編集モード切替"><svg><use href="#pencil"/></svg></button>
        <button class="tool" disabled aria-label="編集内容を保存"><svg><use href="#save-edit"/></svg></button>
        <button class="tool menu" disabled aria-label="線分でデジタイズ"><svg><use href="#digitize"/></svg><svg class="caret"><use href="#caret"/></svg></button>
        <button class="tool" disabled aria-label="ポリゴン地物を追加"><svg><use href="#polygon-new"/></svg></button>
        <button class="tool menu" disabled aria-label="頂点ツール"><svg><use href="#vertex"/></svg><svg class="caret"><use href="#caret"/></svg></button>
        <button class="tool" disabled aria-label="属性を変更"><svg><use href="#attributes-edit"/></svg></button>
        <button class="tool" disabled aria-label="選択物を削除"><svg><use href="#trash"/></svg></button>
        <button class="tool" disabled aria-label="切り取り"><svg><use href="#cut"/></svg></button>
        <button class="tool" disabled aria-label="コピー"><svg><use href="#copy"/></svg></button>
        <button class="tool" disabled aria-label="貼り付け"><svg><use href="#paste"/></svg></button>
        <button class="tool" disabled aria-label="元に戻す"><svg><use href="#undo"/></svg></button>
        <button class="tool" disabled aria-label="やり直す"><svg><use href="#redo"/></svg></button>
        <span class="handle"></span>
        <button class="tool" aria-label="ラベル設定"><svg viewBox="0 0 24 24"><use href="#label"/><text x="7" y="12">abc</text></svg></button>
        <button class="tool" aria-label="ダイアグラム設定"><svg><use href="#diagram"/></svg></button>
        <span class="separator"></span>
        <button class="tool" aria-label="固定ラベル"><svg viewBox="0 0 24 24"><use href="#label-pin"/><text x="6" y="12">ab</text></svg></button>
        <button class="tool" aria-label="未配置ラベル"><svg viewBox="0 0 24 24"><use href="#label-red"/><text class="red" x="7" y="12">abc</text></svg></button>
        <span class="separator"></span>
        <button class="tool" disabled aria-label="ラベルを固定"><svg viewBox="0 0 24 24"><use href="#label-gray"/><use href="#tool-pin"/><text x="6" y="12">ab</text></svg></button>
        <button class="tool" disabled aria-label="ラベルの表示"><svg viewBox="0 0 24 24"><use href="#label-gray"/><use href="#tool-eye"/><text x="7" y="12">abc</text></svg></button>
        <button class="tool" disabled aria-label="ラベルを移動"><svg viewBox="0 0 24 24"><use href="#label-gray"/><use href="#tool-move"/><text x="7" y="12">abc</text></svg></button>
        <button class="tool" disabled aria-label="ラベルを回転"><svg viewBox="0 0 24 24"><use href="#label-gray"/><use href="#tool-rotate"/><text x="7" y="12">abc</text></svg></button>
        <button class="tool" disabled aria-label="ラベルを変更"><svg viewBox="0 0 24 24"><use href="#label-gray"/><use href="#tool-edit"/><text x="7" y="12">abc</text></svg></button>
        <span class="handle"></span>
        <button class="tool" aria-label="MetaSearch"><svg><use href="#metasearch"/></svg></button>
        <span class="handle"></span>
        <button class="tool" aria-label="Pythonコンソール"><svg><use href="#python"/></svg></button>
        <span class="handle"></span>
        <button class="tool" aria-label="ヘルプ"><svg><use href="#help"/></svg></button>
        <span class="handle"></span>
      </div>

      <main class="workspace">
        <aside class="docks">
          <section class="dock browser">
            <div class="dock-title">
              <h2>ブラウザ</h2>
              <button aria-label="フロート"><svg><use href="#float"/></svg></button>
              <button aria-label="閉じる"><svg><use href="#close"/></svg></button>
            </div>
            <div class="dock-tools">
              <button aria-label="レイヤを追加"><svg><use href="#add-layer"/></svg></button>
              <button aria-label="再読み込み"><svg><use href="#refresh"/></svg></button>
              <button aria-label="フィルタ"><svg><use href="#filter"/></svg></button>
              <button aria-label="すべて折りたたむ"><svg><use href="#collapse"/></svg></button>
              <button aria-label="プロパティ"><svg><use href="#info"/></svg></button>
            </div>
            <ul class="tree">
              <li><svg><use href="#star"/></svg>お気に入り</li>
              <li class="closed"><svg><use href="#bookmarks"/></svg>空間ブックマーク</li>
              <li class="closed"><svg><use href="#project-home"/></svg>プロジェクトホーム</li>
              <li class="closed"><svg><use href="#home"/></svg>ホーム</li>
              <li class="closed"><svg><use href="#folder"/></svg>C:¥ (OS)</li>
              <li><svg><use href="#geopackage"/></svg>GeoPackage</li>
              <li><svg><use href="#feather"/></svg>SpatiaLite</li>
              <li><svg><use href="#postgres"/></svg>PostgreSQL</li>
              <li><svg><use href="#hana"/></svg>SAP HANA</li>
              <li><svg><use href="#mssql"/></svg>MS SQL Server</li>
              <li><svg><use href="#oracle"/></svg>Oracle</li>
              <li><svg><use href="#wms"/></svg>WMS/WMTS</li>
              <li><svg><use href="#vtiles"/></svg>Vector Tiles</li>
              <li class="closed"><svg><use href="#xyz"/></svg>XYZ Tiles</li>
              <li><svg><use href="#wcs"/></svg>WCS</li>
              <li><svg><use href="#wfs"/></svg>WFS / OGC API - Features</li>
              <li><svg><use href="#arcgis"/></svg>ArcGIS REST Servers</li>
              <li><svg><use href="#geonode"/></svg>GeoNode</li>
            </ul>
          </section>
          <div class="splitter"></div>
          <section class="dock layers">
            <div class="dock-title">
              <h2>レイヤ</h2>
              <button aria-label="フロート"><svg><use href="#float"/></svg></button>
              <button aria-label="閉じる"><svg><use href="#close"/></svg></button>
            </div>
            <div class="dock-tools">
              <button aria-label="スタイル"><svg><use href="#brush"/></svg></button>
              <button aria-label="グループを追加"><svg><use href="#group"/></svg></button>
              <button aria-label="地図テーマ"><svg><use href="#eye"/></svg><svg class="caret corner"><use href="#caret"/></svg></button>
              <button aria-label="凡例をフィルタ"><svg><use href="#filter"/></svg><svg class="caret corner"><use href="#caret"/></svg></button>
              <button class="wide" disabled aria-label="式でフィルタ"><svg><use href="#expression"/></svg><svg class="caret"><use href="#caret"/></svg></button>
              <button aria-label="すべて展開"><svg><use href="#expand"/></svg></button>
              <button aria-label="すべて折りたたむ"><svg><use href="#collapse"/></svg></button>
              <button aria-label="レイヤを削除"><svg><use href="#remove"/></svg></button>
            </div>
            <ul class="layer-list">
              <li>
                <input type="checkbox" id="layer-points" checked>
                <span class="symbol dot"></span>
                <label for="layer-points">ティーセン</label>
              </li>
              <li class="current">
                <input type="checkbox" id="layer-voronoi" checked>
                <span class="symbol fill"></span>
                <label for="layer-voronoi"><u>ボロノイ多角形</u><svg class="memory"><use href="#memory"/></svg></label>
              </li>
              <li class="open">
                <input type="checkbox" id="layer-base">
                <svg class="symbol"><use href="#raster"/></svg>
                <label for="layer-base">地理院地図</label>
              </li>
            </ul>
          </section>
        </aside>

        <div class="canvas">
          <svg viewBox="301 122 1618 881" role="img" aria-label="ボロノイ多角形">
            <path class="area" d="M562 236L932 235 1414 237.300 1411 560 1408 873 1034 870.500 565 871z"/>
            <path class="edges" d="M656 235.500L741.700 342.300 860.700 346.700 880 304.700 856 235.300M880 304.700L980 290 983.700 235.300M980 290L1015 316 1106.700 282 1115 235.700M1106.700 282L1172 368 1277 316.300 1317.500 237M1172 368L1154.300 429.500 1045.300 457.700 1012.500 421.500 1015 316M1012.500 421.500L881 415 860.700 346.700M881 415L840.700 500 735.700 509.700 713.300 491.500 741.700 342.300M713.300 491.500L707 491 562.800 381M707 491L584 556.700 563.700 552M584 556.700L633 668 564.500 700M633 668L720 681.500 735.700 509.700M720 681.500L739.500 707 659 871M739.500 707L925 733 902 870.500M925 733L932 728 939 730 1086.500 871M939 730L1172 742 1197 871.500M1172 742L1197 702 1295 701 1408.500 782.500M1295 701L1349 587 1410.500 610M1349 587L1323 546.700 1345.700 463 1411.500 445M1345.700 463L1343 460.700 1277 316.300M1343 460.700L1170 448 1154.300 429.500M1170 448L1201.700 574 1323 546.700M1201.700 574L1180.700 609 1197 702M1180.700 609L1014.700 573 1045.300 457.700M1014.700 573L952 625 932 728M952 625L840.700 500"/>
            <g class="points">
              <circle cx="795" cy="283" r="3.700"/>
              <circle cx="673" cy="382" r="3.700"/>
              <circle cx="791" cy="405" r="3.700"/>
              <circle cx="594" cy="487" r="3.700"/>
              <circle cx="647" cy="587" r="3.700"/>
              <circle cx="809" cy="602" r="3.700"/>
              <circle cx="933" cy="235" r="3.700"/>
              <circle cx="951" cy="356" r="3.700"/>
              <circle cx="945" cy="480" r="3.700"/>
              <circle cx="1034" cy="243" r="3.700"/>
              <circle cx="1188" cy="273" r="3.700"/>
              <circle cx="1077" cy="359" r="3.700"/>
              <circle cx="1363" cy="364" r="3.700"/>
              <circle cx="1257" cy="413" r="3.700"/>
              <circle cx="1251" cy="495" r="3.700"/>
              <circle cx="1121" cy="528" r="3.700"/>
              <circle cx="1411" cy="539" r="3.700"/>
              <circle cx="564" cy="624" r="3.700"/>
              <circle cx="1093" cy="658" r="3.700"/>
              <circle cx="1280" cy="624" r="3.700"/>
              <circle cx="1364" cy="664" r="3.700"/>
              <circle cx="622" cy="750" r="3.700"/>
              <circle cx="777" cy="827" r="3.700"/>
              <circle cx="1084" cy="818" r="3.700"/>
              <circle cx="1282" cy="778" r="3.700"/>
              <circle cx="1034" cy="871" r="3.700"/>
            </g>
          </svg>
        </div>
      </main>

      <footer class="statusbar">
        <div class="search">
          <svg viewBox="0 0 12 12"><circle cx="5" cy="5" r="4" fill="none" stroke="#999" stroke-width="1.500"/><path d="M8 8l3.500 3.500" stroke="#999" stroke-width="1.800"/></svg>
          <input type="text" placeholder="検索(Ctrl + K)" aria-label="検索">
        </div>
        <p class="message">現在のレイヤの編集モードを切り替える</p>
        <label for="coords">座標</label>
        <input class="field coords" type="text" id="coords" value="15587939,4235123">
        <button class="flat" aria-label="表示領域切替"><svg><use href="#extents"/></svg></button>
        <label for="scale">縮尺</label>
        <select class="field scale" id="scale"><option>1:761864</option></select>
        <button class="flat lock" aria-label="縮尺をロック"><svg><use href="#lock"/></svg></button>
        <label for="magnify">拡大</label>
        <div class="spin">
          <input type="text" id="magnify" value="100%">
          <div class="steps"><button aria-label="増やす"></button><button aria-label="減らす"></button></div>
        </div>
        <label class="rotate" for="rotation">回転</label>
        <div class="spin">
          <input type="text" id="rotation" value="0.0 °">
          <div class="steps"><button aria-label="増やす"></button><button aria-label="減らす"></button></div>
        </div>
        <label class="render"><input type="checkbox" checked>レンダ</label>
        <button class="flat crs"><svg><use href="#crs"/></svg>EPSG:3857</button>
        <button class="flat" aria-label="メッセージ"><svg><use href="#message"/></svg></button>
      </footer>
    </div>
  </body>
</html>
```
FILE: styles.css
```
* {
  box-sizing: border-box;
}

body {
  margin: 0;
  font-family: "Noto Sans", "Noto Sans CJK JP", sans-serif;
  font-size: 11px;
  font-feature-settings: "palt";
  color: #000;
  background-color: #efefef;
}

button,
input,
select {
  font: inherit;
  font-feature-settings: inherit;
  color: inherit;
  margin: 0;
}

button {
  border: none;
  padding: 0;
  background: none;
}

h1,
h2,
p,
ul {
  margin: 0;
  padding: 0;
  font-size: 11px;
  font-weight: normal;
}

ul {
  list-style: none;
}

svg {
  display: block;
  flex: none;
}

.sprite {
  position: absolute;
  width: 0;
  height: 0;
}

.window {
  display: flex;
  flex-direction: column;
  height: 100vh;
  border-bottom: 1px solid #b9ba98;
}

/* Title bar */
.titlebar {
  display: flex;
  align-items: center;
  height: 23px;
  padding-left: 2px;
  background: linear-gradient(90deg, #e9f3f8 0%, #eaf3f9 28%, #e2f7f5 33%, #edf7e3 42%, #f6f7bf 50%, #f5f7c8 56%, #ecf8e1 64%, #e9f7e6 75%, #eff7dc 86%, #f1f7dd 100%);
}

.logo {
  width: 16px;
  height: 16px;
}

.titlebar h1 {
  margin-left: 7px;
}

.window-buttons {
  display: flex;
  margin-left: auto;
}

.window-buttons button {
  display: grid;
  place-items: center;
  width: 46px;
  height: 20px;
  padding-bottom: 2px;
}

.window-buttons button:last-child {
  width: 44px;
  margin-right: 4px;
}

.window-buttons svg {
  width: 10px;
  height: 10px;
}

/* Menu */
.menubar {
  display: flex;
  align-items: center;
  gap: 12px;
  height: 20px;
  padding: 0 10px 1px;
  border-bottom: 1px solid #d3d3d3;
}

/* Toolbars */
.toolbar {
  display: flex;
  align-items: center;
  gap: 2px;
  height: 39px;
  background: linear-gradient(#fbfbfb, #efefef);
  border-bottom: 1px solid #b4b4b4;
}

.handle {
  width: 4px;
  height: 17px;
  margin: 0 3px 0 7px;
  background: radial-gradient(circle, #bbb 1px, transparent 1px) 0 0 / 3px 3px;
}

.handle:first-child {
  margin-left: 5px;
}

.separator {
  width: 1px;
  height: 18px;
  margin: 0 2px;
  background-color: #d0d0d0;
}

.tool {
  display: flex;
  align-items: center;
  width: 31px;
  height: 31px;
  padding: 0 2px;
  border: 1px solid transparent;
  border-radius: 2px;
}

.tool svg {
  width: 24px;
  height: 24px;
}

.tool text {
  font-family: "DejaVu Sans", sans-serif;
  font-size: 7px;
  font-weight: bold;
  fill: #665500;
}

.tool text.red {
  fill: #ee2222;
}

.tool.menu {
  width: 43px;
}

.tool .caret,
.dock-tools .caret {
  width: 8px;
  height: 5px;
}

.tool .caret {
  margin-left: 6px;
}

.tool.active {
  background-color: #dedede;
  border-color: #ababab;
}

.tool:disabled svg {
  opacity: 0.4;
  filter: grayscale(0.7);
}

/* Docks */
.workspace {
  display: flex;
  flex: 1;
  min-height: 0;
}

.docks {
  display: flex;
  flex-direction: column;
  flex: none;
  width: 300px;
  padding-right: 6px;
}

.dock {
  display: flex;
  flex-direction: column;
}

.browser {
  height: 423px;
}

.layers {
  flex: 1;
  min-height: 0;
}

.splitter {
  height: 6px;
  width: 16px;
  margin: 0 auto;
  background: radial-gradient(circle, #bbb 1px, transparent 1px) 0 0 / 3px 6px;
}

.dock-title {
  display: flex;
  align-items: center;
  gap: 2px;
  height: 18px;
  padding: 0 2px 0 4px;
}

.dock-title h2 {
  margin-right: auto;
}

.dock-title svg {
  width: 12px;
  height: 12px;
}

.dock-tools {
  display: flex;
  align-items: center;
  gap: 9px;
  height: 32px;
  padding-left: 8px;
}

.dock-tools button {
  display: flex;
  align-items: center;
  position: relative;
}

.dock-tools svg {
  width: 16px;
  height: 16px;
}

.dock-tools .wide {
  gap: 4px;
}

.dock-tools .corner {
  position: absolute;
  right: -4px;
  bottom: -1px;
  width: 6px;
  height: 4px;
}

.dock-tools button:disabled svg {
  opacity: 0.6;
}

.tree,
.layer-list {
  flex: 1;
  min-height: 0;
  background-color: #fff;
  border: 1px solid #b0b0b0;
}

.tree li,
.layer-list li {
  display: flex;
  align-items: center;
  height: 18px;
  white-space: nowrap;
}

.tree li::before,
.layer-list li::before {
  content: "";
  width: 4px;
  height: 8px;
  margin: 0 8px 0 6px;
}

.tree li.closed::before {
  background-color: #555;
  clip-path: polygon(0 0, 100% 50%, 0 100%);
}

.tree svg {
  width: 16px;
  height: 16px;
  margin: 0 6px 0 1px;
}

.layer-list li::before {
  width: 8px;
  height: 5px;
  margin-right: 9px;
}

.layer-list li.open::before {
  background-color: #555;
  clip-path: polygon(0 0, 100% 0, 50% 100%);
}

.layer-list label {
  padding-left: 2px;
}

input[type="checkbox"] {
  appearance: none;
  flex: none;
  width: 14px;
  height: 14px;
  border: 1px solid #b5b5b5;
  background-color: #fff;
}

input[type="checkbox"]:checked {
  background-image: url("data:image/svg+xml,%3Csvg xmlns='http://www.w3.org/2000/svg' viewBox='0 0 12 12'%3E%3Cpath d='M2.500 6l2.500 4 5-8' fill='none' stroke='%23111' stroke-width='1.800'/%3E%3C/svg%3E");
}

.symbol {
  flex: none;
  width: 14px;
  height: 14px;
  margin: 0 5px 0 7px;
}

.symbol.dot {
  width: 8px;
  height: 8px;
  margin: 0 8px 0 10px;
  border: 1px solid #333;
  border-radius: 50%;
  background-color: #ff9e17;
}

.symbol.fill {
  width: 16px;
  height: 16px;
  margin: 0 4px 0 6px;
  background-color: #51d159;
  border: 1px solid #3fb548;
}

.layer-list .current label {
  display: flex;
  align-items: center;
  justify-content: space-between;
  flex: 1;
  height: 18px;
  padding: 0 4px 0 1px;
  background: linear-gradient(#f7fbff, #e6f2fc);
  border: 1px solid #c0dcf3;
}

.memory {
  width: 16px;
  height: 16px;
}

.layer-list .open label {
  font-style: italic;
  color: #808080;
}

/* Map */
.canvas {
  flex: 1;
  min-width: 0;
  margin-right: 1px;
  background-color: #fff;
  border: 1px solid #b0b0b0;
}

.canvas svg {
  width: 100%;
  height: 100%;
}

.area {
  fill: #51d159;
  stroke: #232323;
}

.edges {
  fill: none;
  stroke: #232323;
}

.points {
  fill: #ff9e17;
  stroke: #3a3214;
}

/* Status bar */
.statusbar {
  display: flex;
  align-items: center;
  height: 28px;
  padding: 0 8px 1px 4px;
  font-size: 10px;
  white-space: nowrap;
}

.search {
  display: flex;
  align-items: center;
  gap: 7px;
  width: 200px;
  height: 22px;
  padding-left: 8px;
  font-size: 12px;
  background-color: #fff;
  border: 1px solid #aaa;
  border-radius: 2px;
}

.search svg {
  width: 12px;
  height: 12px;
}

.search input {
  width: 150px;
  padding: 0;
  border: none;
}

.search input::placeholder {
  color: #888;
}

.message {
  margin: 0 auto 0 8px;
  font-size: 10px;
}

.statusbar label {
  margin-right: 6px;
}

.statusbar .rotate {
  margin-right: 10px;
}

.field {
  height: 22px;
  padding: 0 5px;
  background-color: #fff;
  border: 1px solid #aaa;
  border-radius: 2px;
}

.coords {
  width: 107px;
}

.flat {
  display: flex;
  align-items: center;
  gap: 1px;
  margin: 0 14px 0 4px;
}

.flat svg {
  width: 16px;
  height: 16px;
}

.scale {
  appearance: none;
  width: 78px;
  padding: 0 2px;
  background: url("data:image/svg+xml,%3Csvg xmlns='http://www.w3.org/2000/svg' viewBox='0 0 20 20'%3E%3Cpath d='M0 0h20v20H0z' fill='%23f4f4f4'/%3E%3Cpath d='M.5 0v20' stroke='%23aaa'/%3E%3Cpath d='M6 8h8l-4 4z' fill='%23555'/%3E%3C/svg%3E") right / 20px 20px no-repeat #fff;
}

.flat.lock {
  margin: 0 8px 0 11px;
}

.lock svg {
  width: 14px;
}

.spin {
  display: flex;
  width: 83px;
  height: 20px;
  margin-right: 8px;
  background-color: #fff;
  border: 1px solid #aaa;
  border-radius: 2px;
}

.spin input {
  flex: 1;
  width: 40px;
  padding: 0 3px;
  border: none;
}

.steps {
  display: flex;
  flex-direction: column;
  justify-content: center;
  align-items: center;
  gap: 3px;
  width: 14px;
  border-left: 1px solid #aaa;
  background-color: #f4f4f4;
}

.steps button {
  width: 8px;
  height: 4px;
  background-color: #555;
  clip-path: polygon(50% 0, 100% 100%, 0 100%);
}

.steps button:last-child {
  clip-path: polygon(0 0, 100% 0, 50% 100%);
}

.statusbar .render {
  display: flex;
  align-items: center;
  gap: 4px;
  margin: 0 8px 0 0;
}

.flat.crs {
  margin-right: 24px;
}

.flat:last-child {
  margin-right: 0;
}
```
